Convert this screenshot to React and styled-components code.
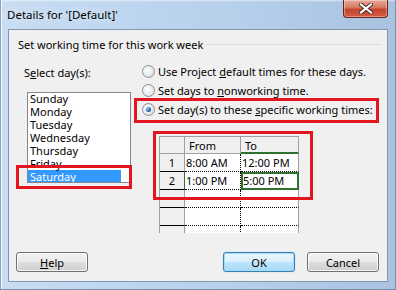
import React from 'react';
import styled, { createGlobalStyle, css } from 'styled-components';

const font = `"Noto Sans", "Open Sans", sans-serif`;

const GlobalStyle = createGlobalStyle`
  html, body { margin: 0; padding: 0; background: #b9d0ea; }
  body { font-family: ${font}; font-size: 11px; color: #000; }
`;

const Window = styled.div`
  width: 396px;
  height: 290px;
  box-sizing: border-box;
  padding: 0 7px 7px 7px;
  display: flex;
  flex-direction: column;
  background:
    linear-gradient(180deg, rgba(255,255,255,0.55) 0px, rgba(255,255,255,0) 2px),
    linear-gradient(90deg, #c9ddf2 0%, #bed6f0 30%, #b6cfeb 60%, #a9c2df 100%);
  border-left: 1px solid #8ba3c1;
  border-right: 1px solid #7990ad;
  border-bottom: 1px solid #7990ad;
  box-shadow: inset 1px 0 0 rgba(255,255,255,0.7);
`;

const TitleBar = styled.div`
  height: 29px;
  display: flex;
  justify-content: space-between;
  align-items: flex-start;
  margin-left: -1px;
`;

const Title = styled.div`
  padding-top: 7px;
  font-size: 11.5px;
  color: #000;
  text-shadow: 0 0 8px rgba(255,255,255,0.9);
`;

const CloseButton = styled.div`
  width: 45px;
  height: 18px;
  box-sizing: border-box;
  border: 1px solid #6b2419;
  border-top: none;
  border-radius: 0 0 4px 4px;
  background: linear-gradient(180deg, #e9a99b 0%, #d7775f 45%, #c4432b 55%, #d65b43 100%);
  box-shadow: inset 0 0 0 1px rgba(255,255,255,0.35);
  display: flex;
  align-items: center;
  justify-content: center;
`;

const Panel = styled.div`
  position: relative;
  flex: 1;
  display: flex;
  flex-direction: column;
  background: #f0f0f0;
  border: 1px solid #8497b0;
`;

const GroupHeader = styled.div`
  display: flex;
  align-items: center;
  gap: 3px;
  margin: 6px 6px 0 9px;
  height: 16px;
`;

const GroupLine = styled.div`
  flex: 1;
  height: 1px;
  background: #d5dfe5;
`;

const Body = styled.div`
  display: flex;
  margin-top: 10px;
`;

const LeftColumn = styled.div`
  width: 118px;
  padding: 4px 0 0 15px;
  display: flex;
  flex-direction: column;
`;

const Label = styled.div`
  height: 14px;
  line-height: 14px;
`;

const ListBox = styled.div`
  margin: 12px 0 0 3px;
  width: 104px;
  height: 91px;
  box-sizing: border-box;
  border: 1px solid #828790;
  background: #fff;
  padding: 0 9px 0 0;
  overflow: hidden;
  & > :first-child { margin-top: -1px; }
`;

const ListItem = styled.div`
  height: 13px;
  line-height: 13px;
  padding-left: 2px;
  ${p => p.$selected && css`
    background: #3399ff;
    color: #fff;
  `}
`;

const RightColumn = styled.div`
  display: flex;
  flex-direction: column;
`;

const RadioRow = styled.div`
  height: 19px;
  display: flex;
  align-items: center;
  gap: 3px;
  white-space: nowrap;
`;

const Radio = styled.span`
  width: 13px;
  height: 13px;
  box-sizing: border-box;
  border-radius: 50%;
  border: 1px solid #8e8f8f;
  background: radial-gradient(circle at 40% 40%, #ffffff 0%, #f0f0f0 40%, #d2d2d2 100%);
  display: flex;
  align-items: center;
  justify-content: center;
  &::after {
    content: '';
    display: ${p => (p.$checked ? 'block' : 'none')};
    width: 5px;
    height: 5px;
    border-radius: 50%;
    background: radial-gradient(circle at 35% 35%, #8ad0f5 0%, #1c5fa8 60%, #0d3d7a 100%);
  }
`;

const TableWrap = styled.div`
  margin: 17px 0 0 17px;
  width: 140px;
  height: 97px;
  overflow: hidden;
  background: #fff;
`;

const Grid = styled.div`
  display: grid;
  grid-template-columns: 25px 56px 58px;
  grid-auto-rows: 18px;
  border-left: 1px solid #a0a0a0;
`;

const HeadCell = styled.div`
  box-sizing: border-box;
  background: #f0f0f0;
  border-top: 1px solid #a0a0a0;
  border-right: 1px solid #a0a0a0;
  border-bottom: ${p => (p.$active ? '2px solid #2f6f2f' : '1px solid #a0a0a0')};
  padding-left: 4px;
  line-height: 17px;
`;

const RowHead = styled.div`
  box-sizing: border-box;
  background: #f0f0f0;
  border-bottom: 1px solid #000;
  border-right: 1px solid ${p => (p.$active ? '#2f6f2f' : '#a0a0a0')};
  text-align: center;
  line-height: 17px;
`;

const Cell = styled.div`
  box-sizing: border-box;
  background: #fff;
  border-bottom: 1px dotted #000;
  border-right: ${p => (p.$last ? '1px solid #a0a0a0' : '1px dotted #000')};
  padding-left: 1px;
  line-height: 17px;
  white-space: nowrap;
  ${p => p.$current && css`
    border: 2px solid #2f6f2f;
    padding-left: 0;
    line-height: 14px;
  `}
`;

const ButtonRow = styled.div`
  margin-top: auto;
  display: flex;
  gap: 12px;
  padding: 0 8px 9px 7px;
`;

const Button = styled.div`
  width: 72px;
  height: 20px;
  box-sizing: border-box;
  border: 1px solid #707070;
  border-radius: 3px;
  background: linear-gradient(180deg, #f2f2f2 0%, #ebebeb 48%, #dddddd 52%, #cfcfcf 100%);
  box-shadow: inset 0 0 0 1px rgba(255,255,255,0.8);
  display: flex;
  align-items: center;
  justify-content: center;
  ${p => p.$push && css`margin-left: auto;`}
  ${p => p.$default && css`
    border-color: #3c7fb1;
    background: linear-gradient(180deg, #eaf6fd 0%, #d9f0fc 48%, #bee6fd 52%, #a7d9f5 100%);
    box-shadow: inset 0 0 0 1px #9fdcf8, 0 0 1px #5fb4e8;
  `}
`;

const Marker = styled.div`
  position: absolute;
  box-sizing: border-box;
  border: 3px solid #e3151f;
  pointer-events: none;
`;

const days = ['Sunday', 'Monday', 'Tuesday', 'Wednesday', 'Thursday', 'Friday', 'Saturday'];

const rows = [
  { n: '1', from: '8:00 AM', to: '12:00 PM' },
  { n: '2', from: '1:00 PM', to: '5:00 PM', active: true },
  { n: '', from: '', to: '' },
  { n: '', from: '', to: '' },
  { n: '', from: '', to: '' },
];

const App = () => {
  return (
    <>
      <GlobalStyle />
      <Window>
        <TitleBar>
          <Title>Details for '[Default]'</Title>
          <CloseButton>
            <svg width="14" height="11" viewBox="0 0 14 11">
              <path d="M2 1.5 L12 9.5 M12 1.5 L2 9.5" stroke="#3a2a28" strokeWidth="4" strokeLinecap="square" />
              <path d="M2 1.5 L12 9.5 M12 1.5 L2 9.5" stroke="#ffffff" strokeWidth="2.2" strokeLinecap="square" />
            </svg>
          </CloseButton>
        </TitleBar>
        <Panel>
          <GroupHeader>
            <span>Set working time for this work week</span>
            <GroupLine />
          </GroupHeader>
          <Body>
            <LeftColumn>
              <Label>S<u>e</u>lect day(s):</Label>
              <ListBox>
                {days.map(d => (
                  <ListItem key={d} $selected={d === 'Saturday'}>{d}</ListItem>
                ))}
              </ListBox>
            </LeftColumn>
            <RightColumn>
              <RadioRow><Radio /><span>Use Project <u>d</u>efault times for these days.</span></RadioRow>
              <RadioRow><Radio /><span>Set days to <u>n</u>onworking time.</span></RadioRow>
              <RadioRow><Radio $checked /><span>Set day(s) to these <u>s</u>pecific working times:</span></RadioRow>
              <TableWrap>
                <Grid>
                  <HeadCell />
                  <HeadCell>From</HeadCell>
                  <HeadCell $active>To</HeadCell>
                  {rows.map((r, i) => (
                    <React.Fragment key={i}>
                      <RowHead $active={r.active}>{r.n}</RowHead>
                      <Cell>{r.from}</Cell>
                      <Cell $last $current={r.active}>{r.to}</Cell>
                    </React.Fragment>
                  ))}
                </Grid>
              </TableWrap>
            </RightColumn>
          </Body>
          <ButtonRow>
            <Button><span><u>H</u>elp</span></Button>
            <Button $push $default>OK</Button>
            <Button>Cancel</Button>
          </ButtonRow>
          <Marker style={{ left: 7, top: 135, width: 116, height: 24 }} />
          <Marker style={{ left: 125, top: 68, width: 245, height: 25 }} />
          <Marker style={{ left: 144, top: 101, width: 160, height: 69 }} />
        </Panel>
      </Window>
    </>
  );
};

export default App;
